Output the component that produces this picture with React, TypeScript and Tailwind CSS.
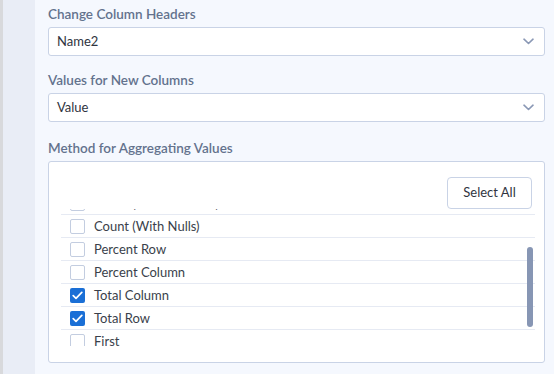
import React from "react";

const font = { fontFamily: 'Lato, "Noto Sans", sans-serif' };

function Chevron() {
  return (
    <svg width="11" height="7" viewBox="0 0 11 7" className="shrink-0">
      <path d="M1 1.2 L5.5 5.5 L10 1.2" fill="none" stroke="#8a98b5" strokeWidth="1.6" strokeLinecap="round" strokeLinejoin="round" />
    </svg>
  );
}

function Select({ value }: { value: string }) {
  return (
    <div className="flex h-[29px] items-center justify-between rounded-[3px] border border-[#c9d3e6] bg-white pl-[8px] pr-[10px]">
      <span className="text-[13px] text-[#2f3440]">{value}</span>
      <Chevron />
    </div>
  );
}

function Label({ children, className = "" }: { children: React.ReactNode; className?: string }) {
  return <div className={`h-[18px] text-[13.5px] leading-[18px] font-semibold text-[#63728d] ${className}`}>{children}</div>;
}

const rows: { label: string; checked: boolean }[] = [
  { label: "Count (Without Nulls)", checked: false },
  { label: "Count (With Nulls)", checked: false },
  { label: "Percent Row", checked: false },
  { label: "Percent Column", checked: false },
  { label: "Total Column", checked: true },
  { label: "Total Row", checked: true },
  { label: "First", checked: false },
];

function Checkbox({ checked }: { checked: boolean }) {
  if (checked) {
    return (
      <div className="flex h-[15px] w-[15px] shrink-0 items-center justify-center rounded-[2px] bg-[#1a6fd6]">
        <svg width="11" height="9" viewBox="0 0 11 9">
          <path d="M1.2 4.6 L4 7.3 L9.8 1.4" fill="none" stroke="white" strokeWidth="1.7" strokeLinecap="round" strokeLinejoin="round" />
        </svg>
      </div>
    );
  }
  return <div className="h-[15px] w-[15px] shrink-0 rounded-[2px] border border-[#c3cde0] bg-white" />;
}

export default function App() {
  return (
    <div className="flex h-[374px] w-[554px] overflow-hidden" style={font}>
      <div className="w-[35px] shrink-0 border-l-[3px] border-[#d8d9dc] bg-[#e9edf6]" />
      <div className="flex flex-1 flex-col bg-[#f5f8fe] pl-[13px] pr-[9px] pt-[5px]">
        <Label className="mb-[4px]">Change Column Headers</Label>
        <Select value="Name2" />
        <Label className="mb-[4px] mt-[15px]">Values for New Columns</Label>
        <Select value="Value" />
        <Label className="mb-[4px] mt-[17px]">Method for Aggregating Values</Label>
        <div className="flex h-[202px] flex-col rounded-[3px] border border-[#c9d3e6] bg-white pl-[12px] pr-[9px] pt-[15px]">
          <div className="flex justify-end pr-[3px]">
            <button className="h-[32px] w-[85px] rounded-[4px] border border-[#c9d3e6] bg-white text-[13px] text-[#2f3440]">
              Select All
            </button>
          </div>
          <div className="relative h-[137px] overflow-hidden">
            <div className="mt-[-18px]">
              {rows.map((r) => (
                <div key={r.label} className="flex h-[23px] items-center gap-[9px] border-t border-[#e6eaf3] pl-[9px]">
                  <Checkbox checked={r.checked} />
                  <span className="pt-[1px] text-[13px] text-[#3a3f4b]">{r.label}</span>
                </div>
              ))}
            </div>
            <div className="absolute right-[2px] top-[38px] h-[80px] w-[6px] rounded-[3px] bg-[#8796b4]" />
          </div>
        </div>
      </div>
    </div>
  );
}
